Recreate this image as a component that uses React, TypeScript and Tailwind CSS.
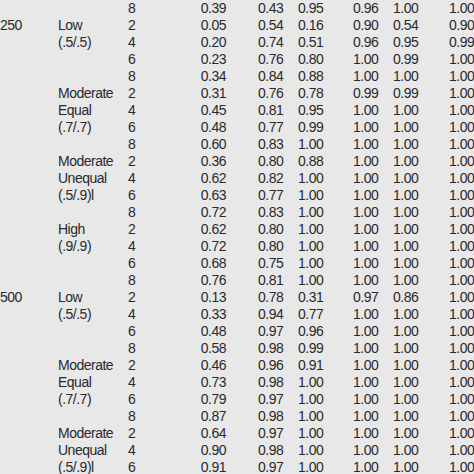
const rows: [string, string, string, string[]][] = [
  ["", "", "8", ["0.39", "0.43", "0.95", "0.96", "1.00", "1.00"]],
  ["250", "Low", "2", ["0.05", "0.54", "0.16", "0.90", "0.54", "0.90"]],
  ["", "(.5/.5)", "4", ["0.20", "0.74", "0.51", "0.96", "0.95", "0.99"]],
  ["", "", "6", ["0.23", "0.76", "0.80", "1.00", "0.99", "1.00"]],
  ["", "", "8", ["0.34", "0.84", "0.88", "1.00", "1.00", "1.00"]],
  ["", "Moderate", "2", ["0.31", "0.76", "0.78", "0.99", "0.99", "1.00"]],
  ["", "Equal", "4", ["0.45", "0.81", "0.95", "1.00", "1.00", "1.00"]],
  ["", "(.7/.7)", "6", ["0.48", "0.77", "0.99", "1.00", "1.00", "1.00"]],
  ["", "", "8", ["0.60", "0.83", "1.00", "1.00", "1.00", "1.00"]],
  ["", "Moderate", "2", ["0.36", "0.80", "0.88", "1.00", "1.00", "1.00"]],
  ["", "Unequal", "4", ["0.62", "0.82", "1.00", "1.00", "1.00", "1.00"]],
  ["", "(.5/.9)l", "6", ["0.63", "0.77", "1.00", "1.00", "1.00", "1.00"]],
  ["", "", "8", ["0.72", "0.83", "1.00", "1.00", "1.00", "1.00"]],
  ["", "High", "2", ["0.62", "0.80", "1.00", "1.00", "1.00", "1.00"]],
  ["", "(.9/.9)", "4", ["0.72", "0.80", "1.00", "1.00", "1.00", "1.00"]],
  ["", "", "6", ["0.68", "0.75", "1.00", "1.00", "1.00", "1.00"]],
  ["", "", "8", ["0.76", "0.81", "1.00", "1.00", "1.00", "1.00"]],
  ["500", "Low", "2", ["0.13", "0.78", "0.31", "0.97", "0.86", "1.00"]],
  ["", "(.5/.5)", "4", ["0.33", "0.94", "0.77", "1.00", "1.00", "1.00"]],
  ["", "", "6", ["0.48", "0.97", "0.96", "1.00", "1.00", "1.00"]],
  ["", "", "8", ["0.58", "0.98", "0.99", "1.00", "1.00", "1.00"]],
  ["", "Moderate", "2", ["0.46", "0.96", "0.91", "1.00", "1.00", "1.00"]],
  ["", "Equal", "4", ["0.73", "0.98", "1.00", "1.00", "1.00", "1.00"]],
  ["", "(.7/.7)", "6", ["0.79", "0.97", "1.00", "1.00", "1.00", "1.00"]],
  ["", "", "8", ["0.87", "0.98", "1.00", "1.00", "1.00", "1.00"]],
  ["", "Moderate", "2", ["0.64", "0.97", "1.00", "1.00", "1.00", "1.00"]],
  ["", "Unequal", "4", ["0.90", "0.98", "1.00", "1.00", "1.00", "1.00"]],
  ["", "(.5/.9)l", "6", ["0.91", "0.97", "1.00", "1.00", "1.00", "1.00"]],
];

export default function App() {
  return (
    <div className="w-[474px] h-[474px] overflow-hidden bg-[#e8e8e8] text-[#2a2a2a] font-['Liberation_Sans',Arial,sans-serif] text-[14px] leading-[17px] tracking-[-0.5px]">
      {rows.map(([n, group, k, vals], i) => (
        <div
          key={i}
          className="grid h-[17px] grid-cols-[58px_70px_50px_48px_72px_55px_40px_56px_1fr] whitespace-nowrap"
        >
          <div>{n}</div>
          <div>{group}</div>
          <div>{k}</div>
          <div className="text-right">{vals[0]}</div>
          <div className="pl-[32px]">{vals[1]}</div>
          <div>{vals[2]}</div>
          <div>{vals[3]}</div>
          <div>{vals[4]}</div>
          <div>{vals[5]}</div>
        </div>
      ))}
    </div>
  );
}
